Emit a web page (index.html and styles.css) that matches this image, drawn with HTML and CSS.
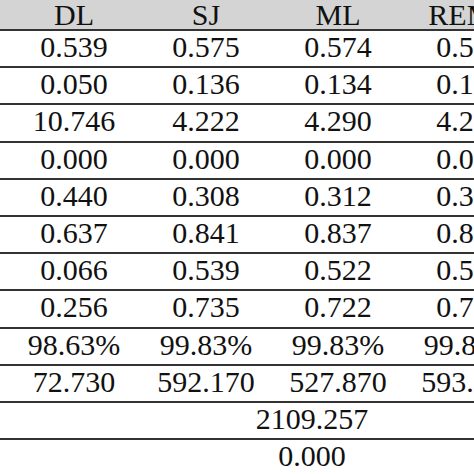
FILE: index.html
```html
<!DOCTYPE html>
<html>
<head>
<meta charset="utf-8">
<link rel="stylesheet" href="styles.css">
</head>
<body>
<div class="table">
  <div class="row head"><div class="cell">DL</div><div class="cell">SJ</div><div class="cell">ML</div><div class="cell">REML</div></div>
  <div class="row"><div class="cell">0.539</div><div class="cell">0.575</div><div class="cell">0.574</div><div class="cell">0.575</div></div>
  <div class="row"><div class="cell">0.050</div><div class="cell">0.136</div><div class="cell">0.134</div><div class="cell">0.136</div></div>
  <div class="row"><div class="cell">10.746</div><div class="cell">4.222</div><div class="cell">4.290</div><div class="cell">4.222</div></div>
  <div class="row"><div class="cell">0.000</div><div class="cell">0.000</div><div class="cell">0.000</div><div class="cell">0.000</div></div>
  <div class="row"><div class="cell">0.440</div><div class="cell">0.308</div><div class="cell">0.312</div><div class="cell">0.308</div></div>
  <div class="row"><div class="cell">0.637</div><div class="cell">0.841</div><div class="cell">0.837</div><div class="cell">0.841</div></div>
  <div class="row"><div class="cell">0.066</div><div class="cell">0.539</div><div class="cell">0.522</div><div class="cell">0.539</div></div>
  <div class="row"><div class="cell">0.256</div><div class="cell">0.735</div><div class="cell">0.722</div><div class="cell">0.735</div></div>
  <div class="row"><div class="cell">98.63%</div><div class="cell">99.83%</div><div class="cell">99.83%</div><div class="cell">99.83%</div></div>
  <div class="row"><div class="cell">72.730</div><div class="cell">592.170</div><div class="cell">527.870</div><div class="cell">593.170</div></div>
  <div class="row"><div class="cell span">2109.257</div></div>
  <div class="row"><div class="cell span">0.000</div></div>
</div>
</body>
</html>
```
FILE: styles.css
```css
html, body {
  margin: 0;
  padding: 0;
  background: #ffffff;
  overflow: hidden;
}
body {
  font-family: "Liberation Serif", "Times New Roman", serif;
  font-size: 30px;
  color: #111111;
}
.table {
  width: 100%;
}
.row {
  display: grid;
  grid-template-columns: repeat(4, 132px);
  padding-left: 8px;
  padding-top: 1px;
  height: 37.2px;
  box-sizing: border-box;
  border-top: 2px solid #333333;
  line-height: 30px;
}
.head {
  height: 29px;
  border-top: 0;
  padding-top: 0;
  background: #d4d4d4;
  align-items: end;
  padding-bottom: 5px;
}
.cell {
  text-align: center;
  white-space: nowrap;
}
.span {
  grid-column: 1 / -1;
  padding-left: 80px;
}
```
